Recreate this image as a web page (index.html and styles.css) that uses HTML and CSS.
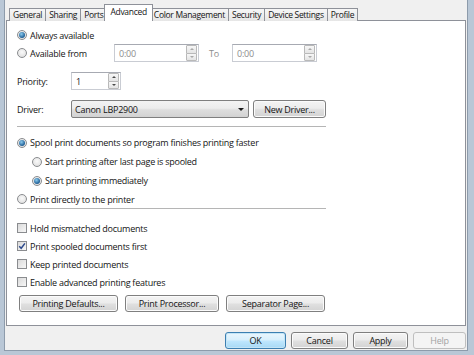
FILE: index.html
```html
<!DOCTYPE html>
<html lang="en">
<head>
    <meta charset="UTF-8">
    <meta name="viewport" content="width=device-width, initial-scale=1.0">
    <title>Printer Properties - Advanced</title>
    <link rel="stylesheet" href="styles.css">
</head>
<body>
    <div class="window">
        <div class="tabs">
            <div class="tab">General</div>
            <div class="tab">Sharing</div>
            <div class="tab">Ports</div>
            <div class="tab active">Advanced</div>
            <div class="tab">Color Management</div>
            <div class="tab">Security</div>
            <div class="tab">Device Settings</div>
            <div class="tab">Profile</div>
        </div>

        <div class="panel">
            <div class="row">
                <span class="radio on"></span>
                <span>Always available</span>
            </div>

            <div class="row">
                <span class="choice">
                    <span class="radio"></span>
                    <span>Available from</span>
                </span>
                <div class="field time disabled">
                    <span class="value">0:00</span>
                    <span class="spin"><span class="up"></span><span class="down"></span></span>
                </div>
                <span class="to">To</span>
                <div class="field time disabled">
                    <span class="value">0:00</span>
                    <span class="spin"><span class="up"></span><span class="down"></span></span>
                </div>
            </div>

            <div class="row gap-10">
                <span class="label">Priority:</span>
                <div class="field priority">
                    <span class="value">1</span>
                    <span class="spin"><span class="up"></span><span class="down"></span></span>
                </div>
            </div>

            <div class="row gap-10">
                <span class="label">Driver:</span>
                <div class="combo">
                    <span>Canon LBP2900</span>
                    <span class="arrow"></span>
                </div>
                <button type="button" class="btn new-driver">New Driver...</button>
            </div>

            <div class="sep first"></div>

            <div class="row tall spool">
                <span class="radio on"></span>
                <span>Spool print documents so program finishes printing faster</span>
            </div>
            <div class="row tall sub">
                <span class="radio"></span>
                <span>Start printing after last page is spooled</span>
            </div>
            <div class="row tall sub">
                <span class="radio on"></span>
                <span>Start printing immediately</span>
            </div>
            <div class="row">
                <span class="radio"></span>
                <span>Print directly to the printer</span>
            </div>

            <div class="sep"></div>

            <div class="row gap-10">
                <span class="check"></span>
                <span>Hold mismatched documents</span>
            </div>
            <div class="row">
                <span class="check on">
                    <svg width="8" height="8" viewBox="0 0 8 8"><path d="M1.2 4.2 L3.2 6.3 L6.9 1.4" fill="none" stroke="#2d4a8c" stroke-width="1.5"/></svg>
                </span>
                <span>Print spooled documents first</span>
            </div>
            <div class="row">
                <span class="check"></span>
                <span>Keep printed documents</span>
            </div>
            <div class="row">
                <span class="check"></span>
                <span>Enable advanced printing features</span>
            </div>

            <div class="panel-buttons">
                <button type="button" class="btn wide">Printing Defaults...</button>
                <button type="button" class="btn mid">Print Processor...</button>
                <button type="button" class="btn wide">Separator Page...</button>
            </div>
        </div>

        <div class="footer">
            <button type="button" class="btn default ok">OK</button>
            <button type="button" class="btn cancel">Cancel</button>
            <button type="button" class="btn apply">Apply</button>
            <button type="button" class="btn help" disabled>Help</button>
        </div>
    </div>
</body>
</html>
```

FILE: styles.css
```css
* {
    box-sizing: border-box;
}

body {
    margin: 0;
    font-family: "Open Sans", "Noto Sans", sans-serif;
    font-size: 9px;
    letter-spacing: -0.25px;
    color: #141414;
}

.window {
    width: 474px;
    height: 355px;
    background-color: #f0f0f0;
    border-left: 4px solid #b9c7d6;
    border-right: 6px solid #b9c7d6;
    border-bottom: 4px solid #b9c7d6;
    box-shadow: inset 1px -1px 0 #8d9bab, inset -1px 0 0 #8d9bab;
    padding: 0 2px;
    display: flex;
    flex-direction: column;
}

/* tab strip */
.tabs {
    display: flex;
    align-items: flex-end;
    height: 21px;
    padding-left: 4px;
    margin-bottom: -1px;
    position: relative;
    z-index: 1;
}

.tab {
    height: 13px;
    line-height: 12px;
    padding: 0 3px;
    margin-left: -1px;
    font-size: 8.5px;
    letter-spacing: -0.3px;
    border: 1px solid #8e9199;
    border-bottom: none;
    background: linear-gradient(#f6f6f6, #e6e6e6);
    white-space: nowrap;
}

.tab.active {
    height: 17px;
    line-height: 14px;
    padding: 0 5px;
    margin: 0 -2px 0 -3px;
    background: #fff;
    position: relative;
    z-index: 2;
}

/* page */
.panel {
    height: 306px;
    background-color: #fff;
    border: 1px solid #8e9199;
    padding: 5px 0 0 10px;
}

.row {
    height: 18px;
    display: flex;
    align-items: center;
    white-space: nowrap;
}

.row.tall {
    height: 19px;
}

.row.spool {
    margin-top: 6px;
}

.row.sub {
    padding-left: 15px;
}

.gap-10 {
    margin-top: 10px;
}

.radio {
    width: 10px;
    height: 10px;
    border-radius: 50%;
    border: 1px solid #8a8c8f;
    background: radial-gradient(circle at 50% 40%, #fafafa, #dadada);
    margin-right: 3px;
    flex-shrink: 0;
    display: flex;
    align-items: center;
    justify-content: center;
}

.radio.on::after {
    content: "";
    width: 6px;
    height: 6px;
    border-radius: 50%;
    background: radial-gradient(circle at 40% 35%, #8ccbee, #1d5d94 70%);
}

.check {
    width: 10px;
    height: 10px;
    border: 1px solid #8a8c8f;
    background: linear-gradient(135deg, #dadada, #f7f7f7);
    margin-right: 3px;
    flex-shrink: 0;
    display: flex;
    align-items: center;
    justify-content: center;
}

.choice {
    width: 97px;
    display: flex;
    align-items: center;
}

.label {
    width: 54px;
}

.to {
    width: 33px;
    padding-left: 10px;
    color: #8c8c8c;
}

/* text boxes with spinners */
.field {
    height: 18px;
    display: flex;
    align-items: center;
    justify-content: space-between;
    border: 1px solid #c9ccd3;
    border-top-color: #a7aab2;
    background-color: #fff;
    padding: 0 1px 0 4px;
}

.field.time {
    width: 85px;
}

.field.priority {
    width: 50px;
}

.field.disabled .value {
    color: #8c8c8c;
}

.spin {
    width: 11px;
    height: 16px;
    display: flex;
    flex-direction: column;
}

.spin span {
    flex: 1;
    border: 1px solid #b9b9b9;
    border-radius: 1px;
    background: linear-gradient(#f7f7f7, #e4e4e4);
    display: flex;
    align-items: center;
    justify-content: center;
}

.spin .down {
    margin-top: -1px;
}

.spin .up::after,
.spin .down::after {
    content: "";
    border-left: 2px solid transparent;
    border-right: 2px solid transparent;
}

.spin .up::after {
    border-bottom: 2px solid #4a4a4a;
}

.spin .down::after {
    border-top: 2px solid #4a4a4a;
}

.field.disabled .spin .up::after {
    border-bottom-color: #a8a8a8;
}

.field.disabled .spin .down::after {
    border-top-color: #a8a8a8;
}

/* combo box */
.combo {
    width: 178px;
    height: 18px;
    display: flex;
    align-items: center;
    justify-content: space-between;
    padding: 0 4px 0 3px;
    border: 1px solid #7f7f7f;
    border-radius: 2px;
    background: linear-gradient(#f3f3f3, #ececec 45%, #dedede 55%, #d2d2d2);
}

.combo .arrow {
    border-left: 3px solid transparent;
    border-right: 3px solid transparent;
    border-top: 3px solid #1b1b1b;
}

/* buttons */
.btn {
    height: 17px;
    padding: 0;
    font-family: inherit;
    font-size: 9px;
    letter-spacing: -0.25px;
    color: #141414;
    border: 1px solid #7f7f7f;
    border-radius: 3px;
    background: linear-gradient(#f4f4f4, #ececec 45%, #dfdfdf 55%, #d3d3d3);
    box-shadow: inset 0 0 0 1px #fbfbfb;
}

.new-driver {
    width: 73px;
    margin-left: 4px;
    height: 18px;
}

.sep {
    width: 309px;
    height: 1px;
    background-color: #b5b5b5;
    margin-top: 8px;
}

.sep:not(.first) {
    margin-top: 0;
}

.panel-buttons {
    display: flex;
    gap: 7px;
    margin-top: 4px;
    padding-left: 2px;
}

.btn.wide {
    width: 99px;
}

.btn.mid {
    width: 94px;
}

/* dialog buttons */
.footer {
    display: flex;
    justify-content: flex-end;
    gap: 5px;
    padding-top: 6px;
}

.ok {
    width: 61px;
}

.cancel {
    width: 57px;
}

.apply {
    width: 55px;
}

.help {
    width: 53px;
}

.btn.default {
    border-color: #3c7fb1;
    background: linear-gradient(#eaf6fd, #d9f0fc 45%, #bee6fd 55%, #a7d9f5);
    box-shadow: inset 0 0 0 1px #c4e5f6;
}

.btn:disabled {
    color: #a3a3a3;
    border-color: #bfbfbf;
    background: #f4f4f4;
    box-shadow: none;
}
```
